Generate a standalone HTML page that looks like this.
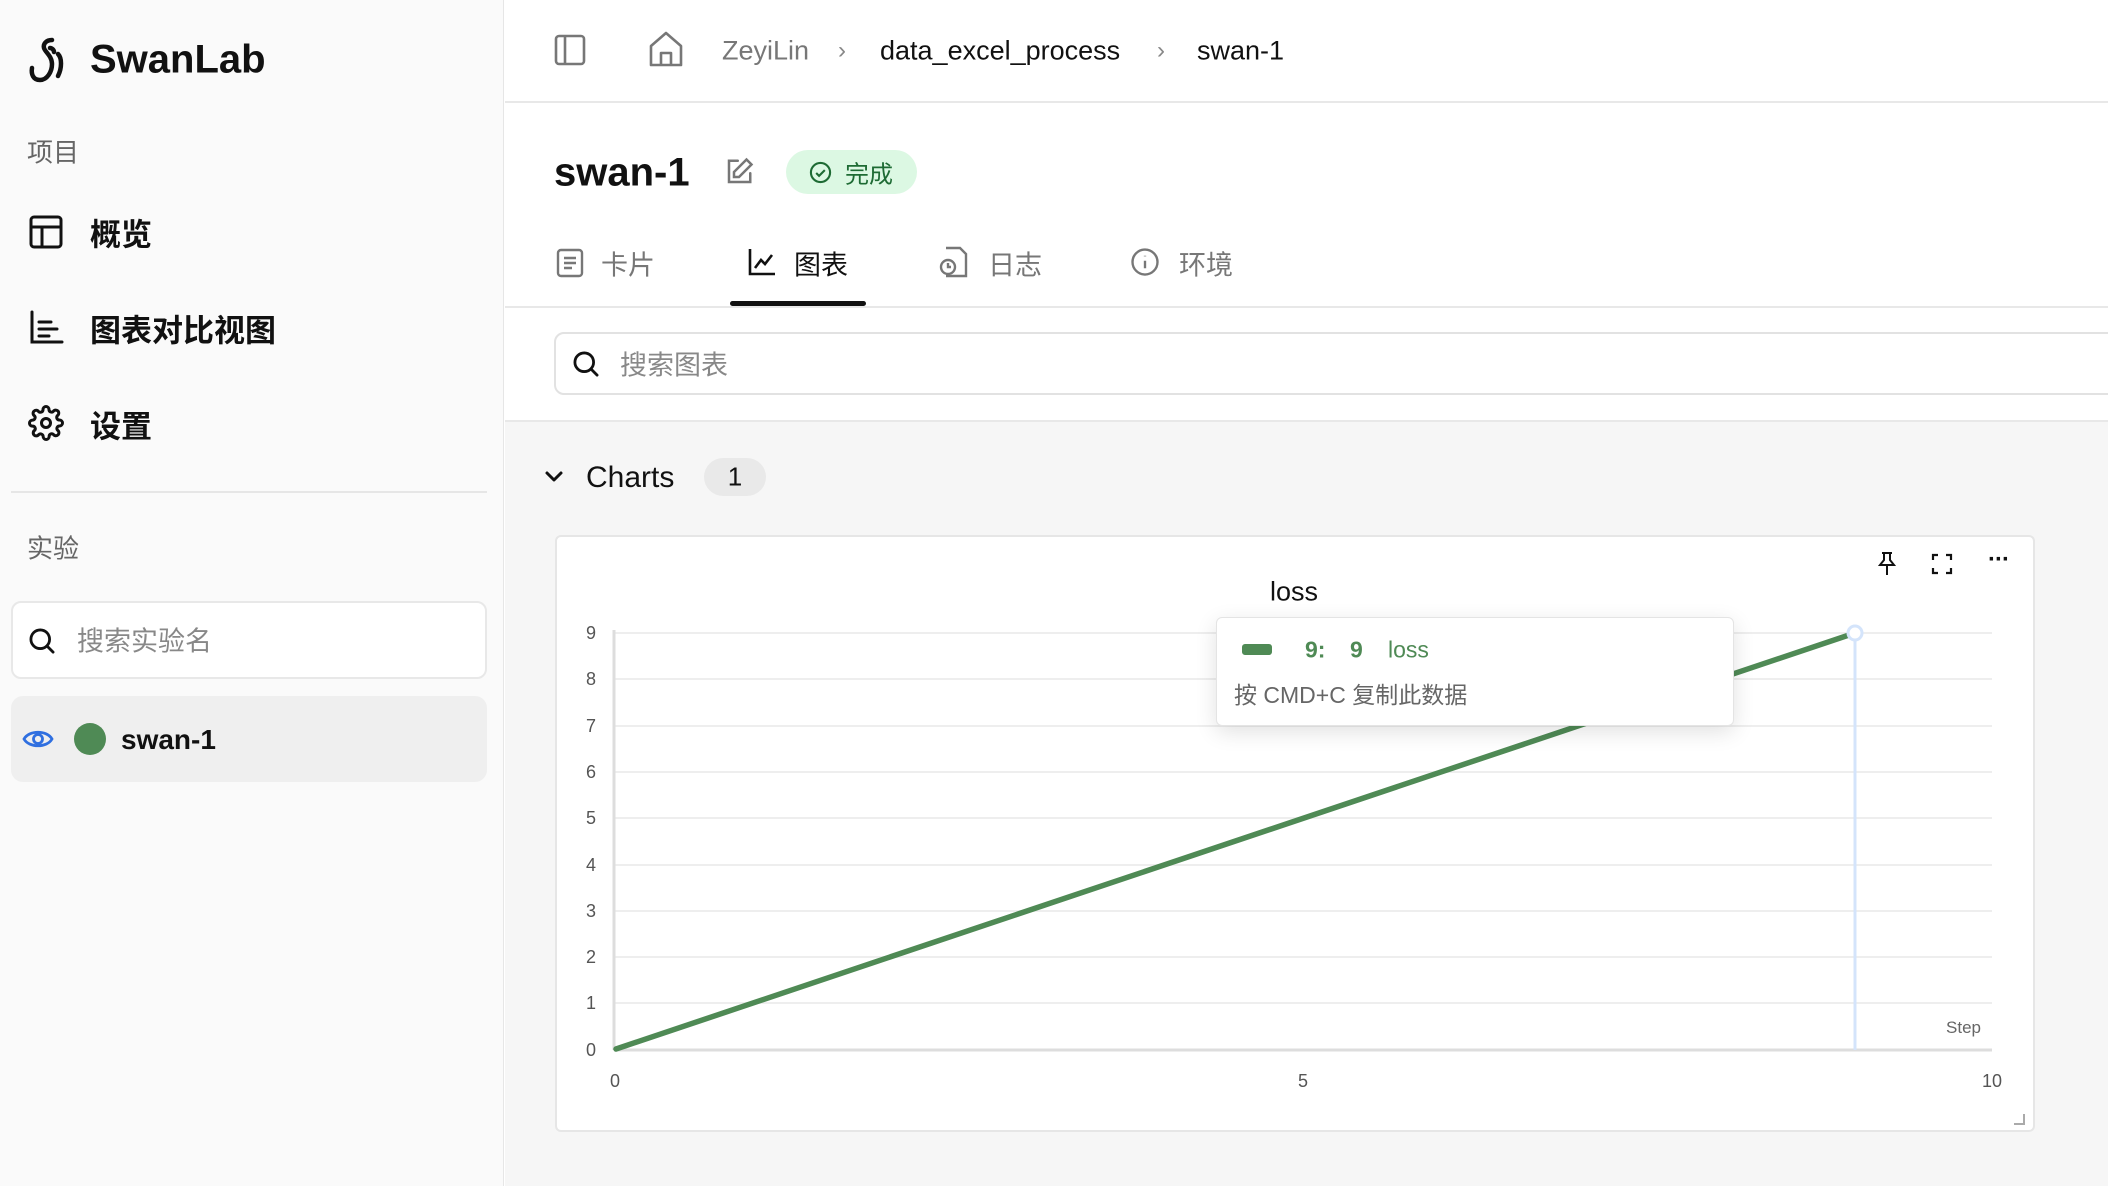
<!DOCTYPE html>
<html><head><meta charset="utf-8"><style>
*{margin:0;padding:0;box-sizing:border-box}
body{width:2108px;height:1186px;overflow:hidden;background:#fff;font-family:"Liberation Sans","Noto Sans CJK SC",sans-serif;color:#111;position:relative}
.a{position:absolute;white-space:nowrap}
.vc{transform:translateY(-50%)}
svg{position:absolute;overflow:visible}
</style></head><body>
<!-- sidebar -->
<div class="a" style="left:0;top:0;width:504px;height:1186px;background:#fafafa;border-right:1px solid #e6e6e6"></div>
<svg style="left:28px;top:36px" width="44" height="48" viewBox="0 0 44 48" fill="none" stroke="#111" stroke-width="4.5" stroke-linecap="round"><path d="M24 4c-6 0-9 4-8 8s8 8 8 16-5 16-12 16-9-6-8-12"/><path d="M30 18c4 4 4 14 0 22"/><path d="M22 12c2 0 4 2 4 4"/></svg>
<div class="a vc" style="left:90px;top:60px;font-size:40px;font-weight:700">SwanLab</div>
<div class="a vc" style="left:27px;top:151px;font-size:26px;color:#666">项目</div>
<svg style="left:29px;top:215px" width="34" height="34" viewBox="0 0 34 34" fill="none" stroke="#111" stroke-width="3"><rect x="2" y="2" width="30" height="30" rx="3"/><path d="M2 12h30M13 12v20"/></svg>
<div class="a vc" style="left:90px;top:232px;font-size:31px;font-weight:600">概览</div>
<svg style="left:29px;top:310px" width="34" height="34" viewBox="0 0 34 34" fill="none" stroke="#111" stroke-width="3" stroke-linecap="round"><path d="M3 2v30h30M10 12h12M10 19h18M10 26h10"/></svg>
<div class="a vc" style="left:90px;top:328px;font-size:31px;font-weight:600">图表对比视图</div>
<svg style="left:28px;top:405px" width="36" height="36" viewBox="0 0 24 24" fill="none" stroke="#111" stroke-width="2"><circle cx="12" cy="12" r="3"/><path d="M19.4 15a1.7 1.7 0 0 0 .3 1.8l.1.1a2 2 0 1 1-2.8 2.8l-.1-.1a1.7 1.7 0 0 0-1.8-.3 1.7 1.7 0 0 0-1 1.5V21a2 2 0 1 1-4 0v-.1a1.7 1.7 0 0 0-1.1-1.5 1.7 1.7 0 0 0-1.8.3l-.1.1a2 2 0 1 1-2.8-2.8l.1-.1a1.7 1.7 0 0 0 .3-1.8 1.7 1.7 0 0 0-1.5-1H3a2 2 0 1 1 0-4h.1a1.7 1.7 0 0 0 1.5-1.1 1.7 1.7 0 0 0-.3-1.8l-.1-.1a2 2 0 1 1 2.8-2.8l.1.1a1.7 1.7 0 0 0 1.8.3H9a1.7 1.7 0 0 0 1-1.5V3a2 2 0 1 1 4 0v.1a1.7 1.7 0 0 0 1 1.5 1.7 1.7 0 0 0 1.8-.3l.1-.1a2 2 0 1 1 2.8 2.8l-.1.1a1.7 1.7 0 0 0-.3 1.8V9a1.7 1.7 0 0 0 1.5 1H21a2 2 0 1 1 0 4h-.1a1.7 1.7 0 0 0-1.5 1z"/></svg>
<div class="a vc" style="left:90px;top:424px;font-size:31px;font-weight:600">设置</div>
<div class="a" style="left:11px;top:491px;width:476px;height:2px;background:#e6e6e6"></div>
<div class="a vc" style="left:27px;top:547px;font-size:26px;color:#666">实验</div>
<div class="a" style="left:11px;top:601px;width:476px;height:78px;border:2px solid #e8e8e8;border-radius:10px;background:#fff"></div>
<svg style="left:28px;top:627px" width="28" height="28" viewBox="0 0 24 24" fill="none" stroke="#111" stroke-width="2.4" stroke-linecap="round"><circle cx="10.5" cy="10.5" r="8"/><path d="M16.5 16.5l5 5"/></svg>
<div class="a vc" style="left:77px;top:639px;font-size:27px;color:#888">搜索实验名</div>
<div class="a" style="left:11px;top:696px;width:476px;height:86px;border-radius:12px;background:#efefef"></div>
<svg style="left:22px;top:727px" width="32" height="24" viewBox="0 0 32 24" fill="none" stroke="#2f6fe0" stroke-width="2.8"><path d="M2 12C7 3 25 3 30 12 25 21 7 21 2 12z"/><circle cx="16" cy="12" r="4.5"/></svg>
<div class="a" style="left:74px;top:723px;width:32px;height:32px;border-radius:50%;background:#4f8a55"></div>
<div class="a vc" style="left:121px;top:740px;font-size:28px;font-weight:700">swan-1</div>

<!-- header -->
<div class="a" style="left:505px;top:101px;width:1603px;height:2px;background:#e8e8e8"></div>
<svg style="left:554px;top:34px" width="32" height="32" viewBox="0 0 32 32" fill="none" stroke="#777" stroke-width="2.6"><rect x="2" y="2" width="28" height="28" rx="3"/><path d="M11 2v28"/></svg>
<svg style="left:649px;top:31px" width="34" height="36" viewBox="0 0 34 36" fill="none" stroke="#777" stroke-width="2.6" stroke-linejoin="round"><path d="M2 15L17 2l15 13v19H2z"/><path d="M12 34V22h10v12"/></svg>
<div class="a vc" style="left:722px;top:51px;font-size:27px;color:#777">ZeyiLin</div>
<div class="a vc" style="left:838px;top:51px;font-size:24px;color:#888">›</div>
<div class="a vc" style="left:880px;top:51px;font-size:27px;color:#111">data_excel_process</div>
<div class="a vc" style="left:1157px;top:51px;font-size:24px;color:#888">›</div>
<div class="a vc" style="left:1197px;top:51px;font-size:27px;color:#111">swan-1</div>

<div class="a vc" style="left:554px;top:173px;font-size:40px;font-weight:700">swan-1</div>
<svg style="left:724px;top:157px" width="30" height="30" viewBox="0 0 24 24" fill="none" stroke="#777" stroke-width="2" stroke-linecap="round"><path d="M11 3H4v17h17v-7"/><path d="M18 2l4 4-10 10H8v-4z"/></svg>
<div class="a" style="left:786px;top:150px;width:131px;height:44px;border-radius:22px;background:#dcf8e3"></div>
<svg style="left:809px;top:161px" width="23" height="23" viewBox="0 0 24 24" fill="none" stroke="#1e6b34" stroke-width="2.2"><circle cx="12" cy="12" r="10"/><path d="M7.5 12.5l3 3 6-6"/></svg>
<div class="a vc" style="left:845px;top:172px;font-size:24px;color:#1e6b34">完成</div>

<!-- tabs -->
<svg style="left:556px;top:248px" width="28" height="30" viewBox="0 0 28 30" fill="none" stroke="#777" stroke-width="2.4"><rect x="2" y="2" width="24" height="26" rx="3"/><path d="M8 10h12M8 15h12M8 20h8"/></svg>
<div class="a vc" style="left:601px;top:263px;font-size:27px;color:#777">卡片</div>
<svg style="left:748px;top:248px" width="28" height="28" viewBox="0 0 28 28" fill="none" stroke="#111" stroke-width="2.6"><path d="M2 1v25h25"/><path d="M7 20l6-8 4 4 7-9"/></svg>
<div class="a vc" style="left:794px;top:263px;font-size:27px;color:#111">图表</div>
<div class="a" style="left:730px;top:301px;width:136px;height:5px;border-radius:3px;background:#111"></div>
<svg style="left:938px;top:246px" width="30" height="32" viewBox="0 0 30 32" fill="none" stroke="#777" stroke-width="2.4"><path d="M8 2h14l6 6v22H8"/><circle cx="10" cy="21" r="7"/><path d="M10 17v4h3"/></svg>
<div class="a vc" style="left:988px;top:263px;font-size:27px;color:#777">日志</div>
<svg style="left:1130px;top:247px" width="30" height="30" viewBox="0 0 24 24" fill="none" stroke="#777" stroke-width="1.9"><circle cx="12" cy="12" r="10"/><path d="M12 11v6M12 7v.5"/></svg>
<div class="a vc" style="left:1179px;top:263px;font-size:27px;color:#777">环境</div>
<div class="a" style="left:505px;top:306px;width:1603px;height:2px;background:#e8e8e8"></div>

<div class="a" style="left:554px;top:332px;width:1570px;height:63px;border:2px solid #e2e2e2;border-radius:10px"></div>
<svg style="left:572px;top:350px" width="28" height="28" viewBox="0 0 24 24" fill="none" stroke="#111" stroke-width="2.4" stroke-linecap="round"><circle cx="10.5" cy="10.5" r="8"/><path d="M16.5 16.5l5 5"/></svg>
<div class="a vc" style="left:620px;top:363px;font-size:27px;color:#888">搜索图表</div>

<!-- content area -->
<div class="a" style="left:505px;top:420px;width:1603px;height:766px;background:#f6f6f6;border-top:2px solid #e8e8e8"></div>
<svg style="left:544px;top:469px" width="20" height="16" viewBox="0 0 20 16" fill="none" stroke="#111" stroke-width="3" stroke-linecap="round" stroke-linejoin="round"><path d="M3 4l7 7 7-7"/></svg>
<div class="a vc" style="left:586px;top:478px;font-size:30px;color:#111">Charts</div>
<div class="a" style="left:704px;top:458px;width:62px;height:38px;border-radius:19px;background:#e9e9e9"></div>
<div class="a vc" style="left:704px;top:477px;width:62px;text-align:center;font-size:26px">1</div>

<div class="a" style="left:555px;top:535px;width:1480px;height:597px;background:#fff;border:2px solid #e6e6e6;border-radius:6px"></div>
<svg style="left:1877px;top:551px" width="20" height="26" viewBox="0 0 20 26" fill="none" stroke="#111" stroke-width="2"><path d="M5 2h10M7 2v7l-4 5h14l-4-5V2M10 14v10"/></svg>
<svg style="left:1932px;top:554px" width="20" height="20" viewBox="0 0 20 20" fill="none" stroke="#111" stroke-width="2.2"><path d="M1 6V1h5M14 1h5v5M19 14v5h-5M6 19H1v-5"/></svg>
<div class="a vc" style="left:1988px;top:560px;font-size:24px;font-weight:700;letter-spacing:-1px">···</div>
<div class="a vc" style="left:1270px;top:592px;font-size:27px">loss</div>

<svg style="left:0;top:0" width="2108" height="1186">
<g stroke="#eeeeee" stroke-width="2">
<line x1="614" y1="633" x2="1992" y2="633"/><line x1="614" y1="679" x2="1992" y2="679"/><line x1="614" y1="726" x2="1992" y2="726"/><line x1="614" y1="772" x2="1992" y2="772"/><line x1="614" y1="818" x2="1992" y2="818"/><line x1="614" y1="865" x2="1992" y2="865"/><line x1="614" y1="911" x2="1992" y2="911"/><line x1="614" y1="957" x2="1992" y2="957"/><line x1="614" y1="1003" x2="1992" y2="1003"/>
</g>
<line x1="614" y1="1050" x2="1992" y2="1050" stroke="#dddddd" stroke-width="3"/>
<line x1="614" y1="630" x2="614" y2="1050" stroke="#dddddd" stroke-width="3"/>
<g font-family="Liberation Sans" font-size="18" fill="#555" text-anchor="end">
<text x="596" y="639">9</text><text x="596" y="685">8</text><text x="596" y="732">7</text><text x="596" y="778">6</text><text x="596" y="824">5</text><text x="596" y="871">4</text><text x="596" y="917">3</text><text x="596" y="963">2</text><text x="596" y="1009">1</text><text x="596" y="1056">0</text>
</g>
<g font-family="Liberation Sans" font-size="18" fill="#555" text-anchor="middle">
<text x="615" y="1087">0</text><text x="1303" y="1087">5</text><text x="1992" y="1087">10</text>
</g>
<text x="1981" y="1033" font-family="Liberation Sans" font-size="17" fill="#666" text-anchor="end">Step</text>
<line x1="1855" y1="633" x2="1855" y2="1050" stroke="#d4e4fb" stroke-width="3"/>
<line x1="616" y1="1049" x2="1852" y2="634" stroke="#4f8a55" stroke-width="5.5" stroke-linecap="round"/>
<circle cx="1855" cy="633" r="7" fill="#fff" stroke="#d4e4fb" stroke-width="3"/>
<path d="M2014 1124h10v-10" fill="none" stroke="#aaa" stroke-width="2"/>
</svg>

<div class="a" style="left:1216px;top:617px;width:518px;height:109px;background:#fff;border:1px solid #e4e4e4;border-radius:6px;box-shadow:0 6px 22px rgba(0,0,0,.12)"></div>
<div class="a" style="left:1242px;top:644px;width:30px;height:11px;border-radius:3px;background:#4f8a55"></div>
<div class="a vc" style="left:1305px;top:650px;font-size:23px;font-weight:700;color:#4f8a55">9:</div>
<div class="a vc" style="left:1350px;top:650px;font-size:23px;font-weight:700;color:#4f8a55">9</div>
<div class="a vc" style="left:1388px;top:650px;font-size:23px;color:#4f8a55">loss</div>
<div class="a vc" style="left:1234px;top:693px;font-size:23px;color:#666">按 CMD+C 复制此数据</div>
</body></html>
